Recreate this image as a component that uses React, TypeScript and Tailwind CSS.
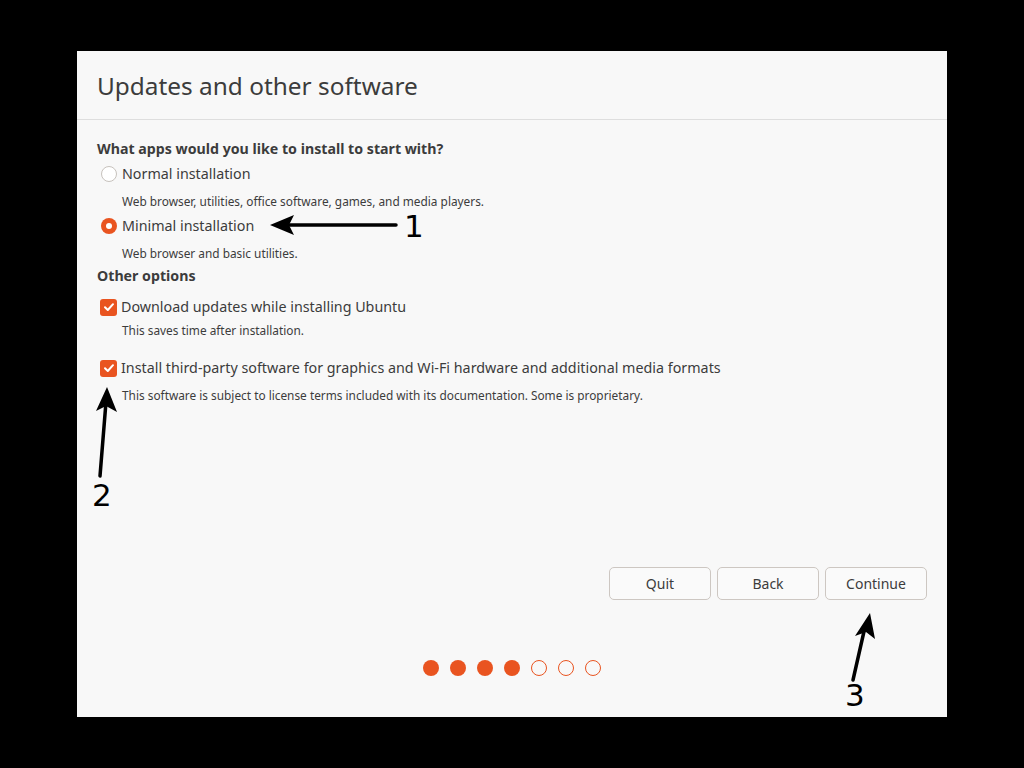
import React from 'react';

function Radio({ checked }: { checked?: boolean }) {
    return checked ? (
        <span className="w-[16px] h-[16px] rounded-full bg-[#E95420] flex items-center justify-center">
            <span className="w-[6px] h-[6px] rounded-full bg-white" />
        </span>
    ) : (
        <span className="w-[16px] h-[16px] rounded-full border border-[#c7c2bd] bg-white" />
    );
}

function Check() {
    return (
        <span className="w-[17px] h-[17px] rounded-[3px] bg-[#E95420] flex items-center justify-center">
            <svg width="12" height="12" viewBox="0 0 12 12">
                <path d="M2 6.2 L4.8 9 L10 3.2" fill="none" stroke="white" strokeWidth="2" strokeLinecap="round" strokeLinejoin="round" />
            </svg>
        </span>
    );
}

function Row({ mt, children, className = '' }: { mt: string; children: React.ReactNode; className?: string }) {
    return <div className={`h-[20px] flex items-center whitespace-nowrap ${mt} ${className}`}>{children}</div>;
}

function Arrows() {
    return (
        <svg className="absolute inset-0 pointer-events-none" width="1024" height="768" viewBox="0 0 1024 768">
            {/* 1 */}
            <line x1="288" y1="225" x2="396" y2="225" stroke="black" strokeWidth="3.5" strokeLinecap="round" />
            <path d="M270 225 L294 215 L289 225 L294 235 Z" fill="black" />
            <text x="404" y="237" fontFamily="DejaVu Sans, sans-serif" fontSize="31" fill="black">1</text>
            {/* 2 */}
            <line x1="100" y1="476" x2="106" y2="402" stroke="black" strokeWidth="3.5" strokeLinecap="round" />
            <path d="M107 387 L117 412 L106 406 L96 411 Z" fill="black" />
            <text x="92" y="506" fontFamily="DejaVu Sans, sans-serif" fontSize="31" fill="black">2</text>
            {/* 3 */}
            <line x1="853" y1="680" x2="865" y2="627" stroke="black" strokeWidth="3.5" strokeLinecap="round" />
            <path d="M870 613 L875 639 L866 632 L855 636 Z" fill="black" />
            <text x="845" y="706" fontFamily="DejaVu Sans, sans-serif" fontSize="31" fill="black">3</text>
        </svg>
    );
}

export default function App() {
    const dots = [true, true, true, true, false, false, false];

    return (
        <div
            className="relative w-[1024px] h-[768px] bg-black pt-[51px] pl-[77px] overflow-hidden"
            style={{ fontFamily: '"Noto Sans", "Open Sans", sans-serif' }}
        >
            <div className="w-[870px] h-[666px] bg-[#f8f8f8] flex flex-col text-[#3c3c3c]">
                <div className="h-[69px] border-b border-[#dedede] px-[20px] flex items-center">
                    <h1 className="text-[24.4px] leading-none pt-[2px]">Updates and other software</h1>
                </div>

                <div className="flex-1 pl-[20px] pt-[19px]">
                    <Row mt="" className="font-bold text-[14.2px]">What apps would you like to install to start with?</Row>
                    <Row mt="mt-[5px]" className="gap-[5px] text-[14.3px]">
                        <span className="ml-[4px] flex"><Radio /></span>
                        Normal installation
                    </Row>
                    <Row mt="mt-[8px]" className="pl-[25px] text-[11.85px]">Web browser, utilities, office software, games, and media players.</Row>
                    <Row mt="mt-[4px]" className="gap-[5px] text-[14.3px]">
                        <span className="ml-[4px] flex"><Radio checked /></span>
                        Minimal installation
                    </Row>
                    <Row mt="mt-[8px]" className="pl-[25px] text-[11.85px]">Web browser and basic utilities.</Row>
                    <Row mt="mt-[2px]" className="font-bold text-[14.2px]">Other options</Row>
                    <Row mt="mt-[11px]" className="gap-[4px] text-[14.3px]">
                        <span className="ml-[3px] flex"><Check /></span>
                        Download updates while installing Ubuntu
                    </Row>
                    <Row mt="mt-[4px]" className="pl-[25px] text-[11.85px]">This saves time after installation.</Row>
                    <Row mt="mt-[17px]" className="gap-[4px] text-[14.3px]">
                        <span className="ml-[3px] flex"><Check /></span>
                        Install third-party software for graphics and Wi-Fi hardware and additional media formats
                    </Row>
                    <Row mt="mt-[8px]" className="pl-[25px] text-[11.85px]">This software is subject to license terms included with its documentation. Some is proprietary.</Row>
                </div>

                <div className="flex justify-end gap-[6px] pr-[20px]">
                    {['Quit', 'Back', 'Continue'].map((b) => (
                        <button
                            key={b}
                            className="w-[102px] h-[33px] rounded-[5px] border border-[#cdc7c2] bg-[#fafafa] text-[14px] text-[#3c3c3c]"
                        >
                            {b}
                        </button>
                    ))}
                </div>

                <div className="flex justify-center gap-[11px] mt-[60px] mb-[41px]">
                    {dots.map((on, i) => (
                        <span
                            key={i}
                            className={on ? 'w-[16px] h-[16px] rounded-full bg-[#E95420]' : 'w-[16px] h-[16px] rounded-full border-[1.5px] border-[#E95420]'}
                        />
                    ))}
                </div>
            </div>
            <Arrows />
        </div>
    );
}
